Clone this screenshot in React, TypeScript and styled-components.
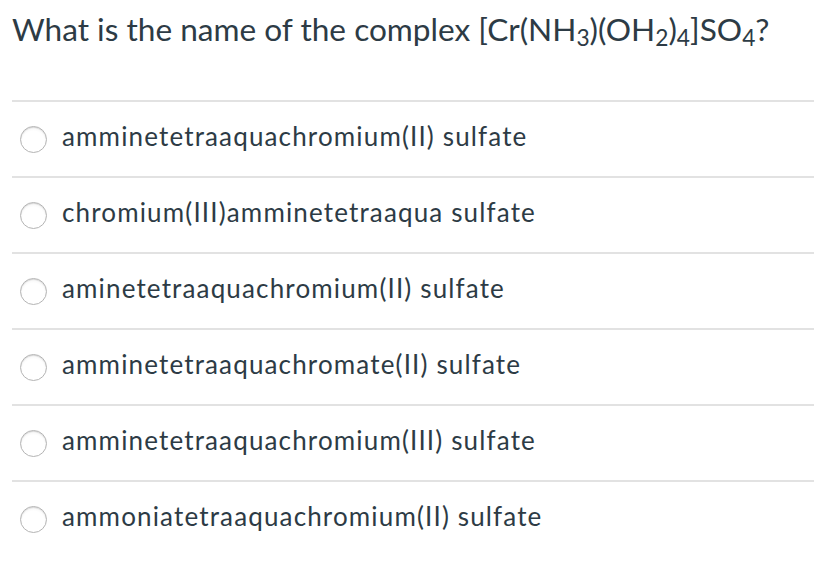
import React from 'react';
import styled, { createGlobalStyle } from 'styled-components';

const GlobalStyle = createGlobalStyle`
  html, body {
    margin: 0;
    padding: 0;
    background: #fff;
  }
  body {
    font-family: Lato, "Noto Sans", sans-serif;
    color: #2d3b45;
  }
`;

const Page = styled.div`
  padding: 0 0 0 12px;
  width: 802px;
`;

const Question = styled.div`
  height: 100px;
  padding-top: 8px;
  box-sizing: border-box;
  font-size: 31.6px;
  line-height: 43px;
  white-space: nowrap;

  sub {
    font-size: 0.72em;
    line-height: 0;
    vertical-align: -0.22em;
  }
`;

const Answers = styled.div`
  display: flex;
  flex-direction: column;
`;

const AnswerRow = styled.label`
  display: flex;
  align-items: center;
  gap: 15px;
  height: 76px;
  box-sizing: border-box;
  border-top: 2px solid #e2e2e2;
  padding-left: 8px;
  cursor: pointer;
`;

const AnswerText = styled.span`
  font-size: 26px;
  letter-spacing: 1.15px;
  margin-bottom: 7px;
`;

const Radio = styled.span`
  width: 25px;
  height: 25px;
  flex: none;
  border-radius: 50%;
  border: 1px solid #b4b4b4;
  background: radial-gradient(circle at 50% 60%, #ffffff 55%, #ececec 100%);
  box-shadow: inset 0 1px 1px rgba(0, 0, 0, 0.12);
`;

const answers = [
  'amminetetraaquachromium(II) sulfate',
  'chromium(III)amminetetraaqua sulfate',
  'aminetetraaquachromium(II) sulfate',
  'amminetetraaquachromate(II) sulfate',
  'amminetetraaquachromium(III) sulfate',
  'ammoniatetraaquachromium(II) sulfate',
];

export default function App() {
  return (
    <>
      <GlobalStyle />
      <Page>
        <Question>
          What is the name of the complex [Cr(NH<sub>3</sub>)(OH<sub>2</sub>)<sub>4</sub>]SO<sub>4</sub>?
        </Question>
        <Answers>
          {answers.map((text) => (
            <AnswerRow key={text}>
              <Radio />
              <AnswerText>{text}</AnswerText>
            </AnswerRow>
          ))}
        </Answers>
      </Page>
    </>
  );
}
